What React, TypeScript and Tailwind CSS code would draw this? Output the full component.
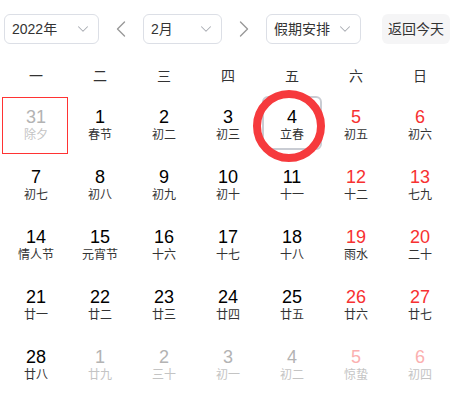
import React from 'react';
import { ChevronDown, ChevronLeft, ChevronRight } from 'lucide-react';

type Day = { d: number; l: string; kind: 'prev' | 'cur' | 'next'; red?: boolean };

const weekdays = ['一', '二', '三', '四', '五', '六', '日'];

const days: Day[] = [
  { d: 31, l: '除夕', kind: 'prev' },
  { d: 1, l: '春节', kind: 'cur' },
  { d: 2, l: '初二', kind: 'cur' },
  { d: 3, l: '初三', kind: 'cur' },
  { d: 4, l: '立春', kind: 'cur' },
  { d: 5, l: '初五', kind: 'cur', red: true },
  { d: 6, l: '初六', kind: 'cur', red: true },
  { d: 7, l: '初七', kind: 'cur' },
  { d: 8, l: '初八', kind: 'cur' },
  { d: 9, l: '初九', kind: 'cur' },
  { d: 10, l: '初十', kind: 'cur' },
  { d: 11, l: '十一', kind: 'cur' },
  { d: 12, l: '十二', kind: 'cur', red: true },
  { d: 13, l: '七九', kind: 'cur', red: true },
  { d: 14, l: '情人节', kind: 'cur' },
  { d: 15, l: '元宵节', kind: 'cur' },
  { d: 16, l: '十六', kind: 'cur' },
  { d: 17, l: '十七', kind: 'cur' },
  { d: 18, l: '十八', kind: 'cur' },
  { d: 19, l: '雨水', kind: 'cur', red: true },
  { d: 20, l: '二十', kind: 'cur', red: true },
  { d: 21, l: '廿一', kind: 'cur' },
  { d: 22, l: '廿二', kind: 'cur' },
  { d: 23, l: '廿三', kind: 'cur' },
  { d: 24, l: '廿四', kind: 'cur' },
  { d: 25, l: '廿五', kind: 'cur' },
  { d: 26, l: '廿六', kind: 'cur', red: true },
  { d: 27, l: '廿七', kind: 'cur', red: true },
  { d: 28, l: '廿八', kind: 'cur' },
  { d: 1, l: '廿九', kind: 'next' },
  { d: 2, l: '三十', kind: 'next' },
  { d: 3, l: '初一', kind: 'next' },
  { d: 4, l: '初二', kind: 'next' },
  { d: 5, l: '惊蛰', kind: 'next', red: true },
  { d: 6, l: '初四', kind: 'next', red: true },
];

const Select: React.FC<{ label: string; width: string }> = ({ label, width }) => (
  <div className={`${width} h-[30px] flex items-center justify-between pl-[7px] pr-[6px] border border-[#dcdfe6] rounded-[6px] bg-white`}>
    <span className="text-[14px] text-[#333]">{label}</span>
    <ChevronDown className="w-[18px] h-[18px] text-[#a8abb2]" strokeWidth={1.4} />
  </div>
);

export default function App() {
  return (
    <div className="w-[459px] h-[402px] bg-white px-[4px] pt-[14px] overflow-hidden" style={{ fontFamily: '"Liberation Sans", "Noto Sans CJK SC", sans-serif' }}>
      <div className="flex items-center h-[30px]">
        <Select label="2022年" width="w-[95px]" />
        <div className="w-[44px] flex justify-center">
          <ChevronLeft className="w-[28px] h-[28px] text-[#999]" strokeWidth={1.2} />
        </div>
        <Select label="2月" width="w-[79px]" />
        <div className="w-[44px] flex justify-center">
          <ChevronRight className="w-[28px] h-[28px] text-[#999]" strokeWidth={1.2} />
        </div>
        <Select label="假期安排" width="w-[95px]" />
        <button className="ml-[21px] w-[68px] h-[30px] rounded-[6px] bg-[#f5f5f6] text-[14px] text-[#333]">返回今天</button>
      </div>

      <div className="grid grid-cols-7 w-[448px] mt-[12px] h-[40px] items-center">
        {weekdays.map((w) => (
          <div key={w} className="text-center text-[14px] text-[#333]">{w}</div>
        ))}
      </div>

      <div className="grid grid-cols-7 w-[448px] gap-y-[4px] mt-[1px]">
        {days.map((day, i) => {
          const faded = day.kind !== 'cur';
          const numColor = faded
            ? day.red ? 'text-[#fbb0b0]' : 'text-[#b3b3b3]'
            : day.red ? 'text-[#f73131]' : 'text-[#000]';
          const lunarColor = faded ? 'text-[#c4c4c4]' : 'text-[#333]';
          const isFirst = i === 0;
          const isToday = day.kind === 'cur' && day.d === 4;
          return (
            <div key={i} className="relative h-[56px] flex flex-col items-center justify-center">
              {isFirst && <div className="absolute top-0 bottom-[-1px] -left-[2px] right-0 border border-[#f33]" />}
              {isToday && <div className="absolute top-[-1px] bottom-[3px] left-[2px] right-[2px] border-2 border-[#c9ccd3] rounded-[6px]" />}
              <span className={`relative text-[18px] leading-[20px] ${numColor}`}>{day.d}</span>
              <span className={`relative text-[12px] leading-[17px] ${lunarColor}`}>{day.l}</span>
              {isToday && (
                <div className="absolute left-[-7px] top-[-7px] w-[72px] h-[72px] rounded-full border-[8px] border-[#f63a3d]" />
              )}
            </div>
          );
        })}
      </div>
    </div>
  );
}
